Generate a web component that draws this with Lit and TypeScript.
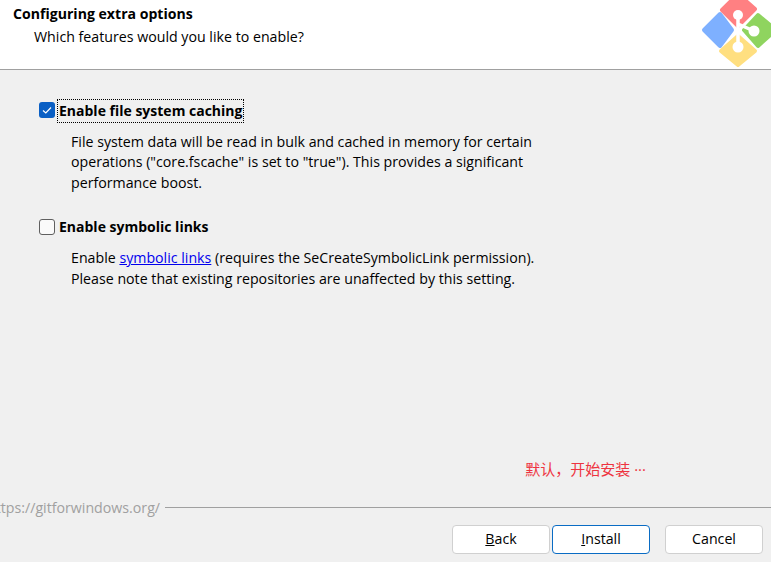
import { LitElement, css, html } from "lit";
import { customElement } from "lit/decorators.js";

const logo = html`<svg class="logo" width="71" height="69" viewBox="0 0 71 69">
  <g stroke-width="4" stroke-linejoin="round">
    <polygon points="4,30 20,14 32,30 20,46" fill="#7eb0ff" stroke="#7eb0ff" />
    <polygon points="21,51 38,36 55,51 38,65" fill="#ffdf80" stroke="#ffdf80" />
    <polygon points="44,30 58,15 76,30 58,46" fill="#8fd45f" stroke="#8fd45f" />
    <polygon points="22,10 38,-6 55,9 38,26" fill="#ff8082" stroke="#ff8082" />
  </g>
  <g stroke="#fff" stroke-width="3.5" fill="#fff">
    <path d="M38 15V47M38 24L54 31" fill="none" />
    <circle cx="38" cy="15" r="5" stroke="none" />
    <circle cx="54" cy="31" r="5.5" stroke="none" />
    <circle cx="38" cy="47" r="5.5" stroke="none" />
  </g>
</svg>`;

@customElement("app-root")
export class AppRoot extends LitElement {
  static styles = css`
    :host {
      display: flex;
      flex-direction: column;
      width: 771px;
      height: 562px;
      overflow: hidden;
      background: #f0f0f0;
      color: #000;
      font: 14.2px/20.5px "Open Sans", "Noto Sans", sans-serif;
    }

    header {
      position: relative;
      height: 70px;
      box-sizing: border-box;
      padding: 4px 13px;
      background: #fff;
      border-bottom: 1px solid #a0a0a0;
      flex: none;
    }

    h1 {
      margin: 0;
      font-size: 14.1px;
      line-height: 20px;
      font-weight: 700;
    }

    header p {
      margin: 3px 0 0 21px;
    }

    .logo {
      position: absolute;
      left: 700px;
      top: 0;
    }

    main {
      flex: 1;
      padding: 31px 39px 0;
    }

    .option {
      display: flex;
      align-items: center;
      gap: 3px;
      height: 20px;
      font-size: 14px;
      font-weight: 700;
    }

    .box {
      width: 16px;
      height: 16px;
      margin-top: -2px;
      box-sizing: border-box;
      border: 1px solid #5f5f5f;
      border-radius: 3px;
      background: #fafafa;
    }

    .box.on {
      border: 0;
      background: #0a5fc4;
    }

    .box svg {
      display: block;
    }

    .label {
      padding: 1px;
    }

    .focus {
      outline: 1px dotted #000;
    }

    .desc {
      margin: 10.5px 0 24.5px 32px;
    }

    a {
      color: #0000ee;
    }

    .hint {
      margin: 1px 125px 18px 0;
      text-align: right;
      font-size: 15px;
      color: #ee3340;
      font-family: "Open Sans", "Noto Sans CJK SC", sans-serif;
    }

    .rule {
      display: flex;
      align-items: center;
      gap: 5px;
      height: 20px;
      color: #a0a0a0;
    }

    .rule span {
      margin: 2px 0 0 -13px;
    }

    .rule i {
      flex: 1;
      height: 1px;
      background: #a0a0a0;
    }

    footer {
      display: flex;
      gap: 2px;
      height: 45px;
      padding: 8px 8px 0 452px;
      box-sizing: border-box;
    }

    button {
      width: 98px;
      height: 29px;
      padding: 0;
      border: 1px solid #d0d0d0;
      border-radius: 4px;
      background: #fff;
      color: #000;
      font: inherit;
    }

    button.primary {
      border-color: #0a6cc4;
    }

    button.cancel {
      margin-left: 13px;
    }
  `;

  render() {
    return html`
      <header>
        <h1>Configuring extra options</h1>
        <p>Which features would you like to enable?</p>
        ${logo}
      </header>
      <main>
        <div class="option">
          <span class="box on">
            <svg width="16" height="16" viewBox="0 0 16 16">
              <path d="M4 8.5L6.8 11L12 5.5" fill="none" stroke="#fff" stroke-width="1.2" />
            </svg>
          </span>
          <span class="label focus">Enable file system caching</span>
        </div>
        <p class="desc">
          File system data will be read in bulk and cached in memory for certain<br />
          operations ("core.fscache" is set to "true"). This provides a significant<br />
          performance boost.
        </p>
        <div class="option">
          <span class="box"></span>
          <span class="label">Enable symbolic links</span>
        </div>
        <p class="desc">
          Enable <a href="#">symbolic links</a> (requires the SeCreateSymbolicLink permission).<br />
          Please note that existing repositories are unaffected by this setting.
        </p>
      </main>
      <div class="hint">默认，开始安装 ···</div>
      <div class="rule"><span>https://gitforwindows.org/</span><i></i></div>
      <footer>
        <button><u>B</u>ack</button>
        <button class="primary"><u>I</u>nstall</button>
        <button class="cancel">Cancel</button>
      </footer>
    `;
  }
}
